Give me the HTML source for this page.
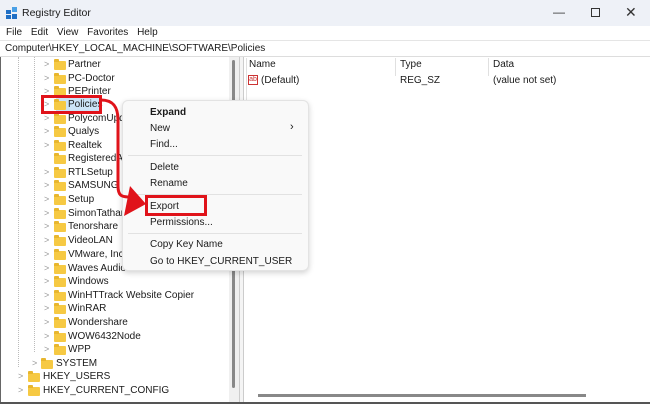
<!DOCTYPE html><html><head><style>
*{margin:0;padding:0;box-sizing:border-box}
body{width:650px;height:404px;background:#fff;font-family:"Liberation Sans",sans-serif;font-size:10px;color:#1a1a1a;position:relative;overflow:hidden}
.a{position:absolute;white-space:nowrap}
.f{position:absolute;width:12px;height:9px;background:#f6c943;border-radius:1px}
.f:before{content:"";position:absolute;left:0;top:-2px;width:5px;height:3px;background:#e8b62e;border-radius:1px 1px 0 0}
.c{position:absolute;color:#999;font-size:9px}
</style></head><body>
<div class="a" style="left:0;top:0;width:650px;height:26px;background:#eef1f7"></div>
<svg class="a" style="left:6px;top:7px" width="12" height="12"><rect x="0" y="3" width="5" height="4" fill="#1f6fc5"/><rect x="6" y="0" width="5" height="5" fill="#4aa0e6"/><rect x="0" y="8" width="5" height="4" fill="#1f6fc5"/><rect x="6" y="7" width="5" height="5" fill="#1f6fc5"/></svg>
<div class="a" style="left:22px;top:7px;font-size:10.5px">Registry Editor</div>
<div class="a" style="left:553px;top:5px;font-size:12px;color:#333">—</div>
<div class="a" style="left:591px;top:8px;width:9px;height:9px;border:1px solid #333"></div>
<div class="a" style="left:625px;top:4px;font-size:14px;color:#333">✕</div>
<div class="a" style="left:0;top:26px;width:650px;height:14px;background:#fff"></div>
<div class="a" style="left:6px;top:27px;word-spacing:6px">File Edit View Favorites Help</div>
<div class="a" style="left:0;top:40px;width:650px;height:17px;background:#fff;border-top:1px solid #e5e5e5;border-bottom:1px solid #ddd"></div>
<div class="a" style="left:5px;top:43px">Computer\HKEY_LOCAL_MACHINE\SOFTWARE\Policies</div>
<div class="a" style="left:0;top:57px;width:1px;height:347px;background:#666"></div>
<div class="a" style="left:0;top:402px;width:650px;height:2px;background:#555"></div>
<div class="a" style="left:229px;top:57px;width:10px;height:345px;background:#f0f0f0"></div>
<div class="a" style="left:232px;top:60px;width:3px;height:328px;background:#888;border-radius:2px"></div>
<div class="a" style="left:239px;top:57px;width:5px;height:345px;background:#f4f4f4;border-left:1px solid #ccc;border-right:1px solid #ccc"></div>
<div class="a" style="left:18px;top:57px;width:1px;height:310px;border-left:1px dotted #bbb"></div>
<div class="a" style="left:34px;top:57px;width:1px;height:295px;border-left:1px dotted #bbb"></div>
<div class="a" style="left:246px;top:58px;width:1px;height:70px;background:#e0e0e0"></div>
<div class="a" style="left:395px;top:58px;width:1px;height:18px;background:#e0e0e0"></div>
<div class="a" style="left:488px;top:58px;width:1px;height:18px;background:#e0e0e0"></div>
<div class="a" style="left:249px;top:59px">Name</div>
<div class="a" style="left:400px;top:59px">Type</div>
<div class="a" style="left:493px;top:59px">Data</div>
<div class="a" style="left:248px;top:75px;width:10px;height:10px;border:1px solid #c33;font-size:7px;color:#c33;line-height:8px;text-align:center">ab</div>
<div class="a" style="left:261px;top:75px">(Default)</div>
<div class="a" style="left:400px;top:75px">REG_SZ</div>
<div class="a" style="left:493px;top:75px">(value not set)</div>
<div class="a" style="left:258px;top:394px;width:328px;height:3px;background:#888"></div>
<div class="a" style="left:56px;top:98px;width:45px;height:13px;background:#cce4f7"></div>
<div id="t"></div>
<script>
var r=[["Partner",64],["PC-Doctor",78],["PEPrinter",91],["Policies",104],["PolycomUpdater",118],["Qualys",131],["Realtek",145],["RegisteredApplications",158],["RTLSetup",172],["SAMSUNG",185],["Setup",199],["SimonTatham",213],["Tenorshare",226],["VideoLAN",240],["VMware, Inc.",254],["Waves Audio",268],["Windows",281],["WinHTTrack Website Copier",295],["WinRAR",308],["Wondershare",322],["WOW6432Node",336],["WPP",349]];
var h="";r.forEach(function(e){var y=e[1]-5;h+='<div class="c" style="left:44px;top:'+(y)+'px">'+(e[0]=="RegisteredApplications"?'':'&gt;')+'</div><div class="f" style="left:54px;top:'+(y+2)+'px"></div><div class="a" style="left:68px;top:'+(y)+'px">'+e[0]+'</div>';});
h+='<div class="c" style="left:32px;top:358px">&gt;</div><div class="f" style="left:41px;top:360px"></div><div class="a" style="left:56px;top:358px">SYSTEM</div>';
h+='<div class="c" style="left:18px;top:371px">&gt;</div><div class="f" style="left:28px;top:373px"></div><div class="a" style="left:43px;top:371px">HKEY_USERS</div>';
h+='<div class="c" style="left:18px;top:385px">&gt;</div><div class="f" style="left:28px;top:387px"></div><div class="a" style="left:43px;top:385px">HKEY_CURRENT_CONFIG</div>';
document.getElementById("t").innerHTML=h;
</script>
<div class="a" style="left:122px;top:100px;width:187px;height:171px;background:#f9f9f9;border:1px solid #e3e3e3;border-radius:6px;box-shadow:0 2px 6px rgba(0,0,0,.18)"></div>
<div class="a" style="left:150px;top:107px;font-weight:bold">Expand</div>
<div class="a" style="left:150px;top:123px">New</div>
<div class="a" style="left:290px;top:121px;font-size:11px">›</div>
<div class="a" style="left:150px;top:139px">Find...</div>
<div class="a" style="left:128px;top:155px;width:174px;height:1px;background:#e2e2e2"></div>
<div class="a" style="left:150px;top:162px">Delete</div>
<div class="a" style="left:150px;top:178px">Rename</div>
<div class="a" style="left:128px;top:194px;width:174px;height:1px;background:#e2e2e2"></div>
<div class="a" style="left:150px;top:201px">Export</div>
<div class="a" style="left:150px;top:217px">Permissions...</div>
<div class="a" style="left:128px;top:233px;width:174px;height:1px;background:#e2e2e2"></div>
<div class="a" style="left:150px;top:239px">Copy Key Name</div>
<div class="a" style="left:150px;top:256px">Go to HKEY_CURRENT_USER</div>
<div class="a" style="left:41px;top:95px;width:61px;height:19px;border:3px solid #e0131a"></div>
<div class="a" style="left:145px;top:195px;width:62px;height:21px;border:3px solid #e0131a"></div>
<svg class="a" style="left:0;top:0" width="650" height="404"><path d="M101 100 C114 100 118 108 118 120 L118 186 C118 195 121 197 129 197" fill="none" stroke="#e0131a" stroke-width="3"/><polygon points="130,186 124,216 146,204" fill="#e0131a"/></svg>
</body></html>
